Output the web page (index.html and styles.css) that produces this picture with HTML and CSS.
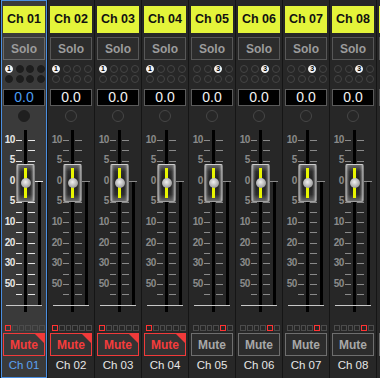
FILE: index.html
```html
<!DOCTYPE html>
<html>
<head>
<meta charset="utf-8">
<link rel="stylesheet" href="styles.css">
</head>
<body>
<div class="mixer">
  <div class="ch sel">
    <div class="name">Ch 01</div>
    <button class="solo">Solo</button>
    <div class="dots"><span class="dot badge">1</span><span class="dot"></span><span class="dot"></span><span class="dot"></span><span class="dot"></span><span class="dot"></span><span class="dot"></span><span class="dot"></span></div>
    <div class="val">0.0</div>
    <div class="knob"></div>
    <div class="fader">
      <div class="scale"><span>10</span><span>5</span><span>0</span><span>5</span><span>10</span><span>20</span><span>30</span><span>50</span></div>
      <div class="cap"><i class="grip"></i><i class="ball"></i></div>
    </div>
    <div class="leds"><i class="on"></i><i></i><i></i><i></i><i></i><i></i></div>
    <button class="mute on">Mute</button>
    <div class="label">Ch 01</div>
  </div>
  <div class="ch">
    <div class="name">Ch 02</div>
    <button class="solo">Solo</button>
    <div class="dots"><span class="dot badge">1</span><span class="dot"></span><span class="dot"></span><span class="dot"></span><span class="dot"></span><span class="dot"></span><span class="dot"></span><span class="dot"></span></div>
    <div class="val">0.0</div>
    <div class="knob"></div>
    <div class="fader">
      <div class="scale"><span>10</span><span>5</span><span>0</span><span>5</span><span>10</span><span>20</span><span>30</span><span>50</span></div>
      <div class="cap"><i class="grip"></i><i class="ball"></i></div>
    </div>
    <div class="leds"><i class="on"></i><i></i><i></i><i></i><i></i><i></i></div>
    <button class="mute on">Mute</button>
    <div class="label">Ch 02</div>
  </div>
  <div class="ch">
    <div class="name">Ch 03</div>
    <button class="solo">Solo</button>
    <div class="dots"><span class="dot badge">1</span><span class="dot"></span><span class="dot"></span><span class="dot"></span><span class="dot"></span><span class="dot"></span><span class="dot"></span><span class="dot"></span></div>
    <div class="val">0.0</div>
    <div class="knob"></div>
    <div class="fader">
      <div class="scale"><span>10</span><span>5</span><span>0</span><span>5</span><span>10</span><span>20</span><span>30</span><span>50</span></div>
      <div class="cap"><i class="grip"></i><i class="ball"></i></div>
    </div>
    <div class="leds"><i class="on"></i><i></i><i></i><i></i><i></i><i></i></div>
    <button class="mute on">Mute</button>
    <div class="label">Ch 03</div>
  </div>
  <div class="ch">
    <div class="name">Ch 04</div>
    <button class="solo">Solo</button>
    <div class="dots"><span class="dot badge">1</span><span class="dot"></span><span class="dot"></span><span class="dot"></span><span class="dot"></span><span class="dot"></span><span class="dot"></span><span class="dot"></span></div>
    <div class="val">0.0</div>
    <div class="knob"></div>
    <div class="fader">
      <div class="scale"><span>10</span><span>5</span><span>0</span><span>5</span><span>10</span><span>20</span><span>30</span><span>50</span></div>
      <div class="cap"><i class="grip"></i><i class="ball"></i></div>
    </div>
    <div class="leds"><i class="on"></i><i></i><i></i><i></i><i></i><i></i></div>
    <button class="mute on">Mute</button>
    <div class="label">Ch 04</div>
  </div>
  <div class="ch">
    <div class="name">Ch 05</div>
    <button class="solo">Solo</button>
    <div class="dots"><span class="dot"></span><span class="dot"></span><span class="dot badge">3</span><span class="dot"></span><span class="dot"></span><span class="dot"></span><span class="dot"></span><span class="dot"></span></div>
    <div class="val">0.0</div>
    <div class="knob"></div>
    <div class="fader">
      <div class="scale"><span>10</span><span>5</span><span>0</span><span>5</span><span>10</span><span>20</span><span>30</span><span>50</span></div>
      <div class="cap"><i class="grip"></i><i class="ball"></i></div>
    </div>
    <div class="leds"><i></i><i></i><i></i><i></i><i class="on"></i><i></i></div>
    <button class="mute">Mute</button>
    <div class="label">Ch 05</div>
  </div>
  <div class="ch">
    <div class="name">Ch 06</div>
    <button class="solo">Solo</button>
    <div class="dots"><span class="dot"></span><span class="dot"></span><span class="dot badge">3</span><span class="dot"></span><span class="dot"></span><span class="dot"></span><span class="dot"></span><span class="dot"></span></div>
    <div class="val">0.0</div>
    <div class="knob"></div>
    <div class="fader">
      <div class="scale"><span>10</span><span>5</span><span>0</span><span>5</span><span>10</span><span>20</span><span>30</span><span>50</span></div>
      <div class="cap"><i class="grip"></i><i class="ball"></i></div>
    </div>
    <div class="leds"><i></i><i></i><i></i><i></i><i class="on"></i><i></i></div>
    <button class="mute">Mute</button>
    <div class="label">Ch 06</div>
  </div>
  <div class="ch">
    <div class="name">Ch 07</div>
    <button class="solo">Solo</button>
    <div class="dots"><span class="dot"></span><span class="dot"></span><span class="dot badge">3</span><span class="dot"></span><span class="dot"></span><span class="dot"></span><span class="dot"></span><span class="dot"></span></div>
    <div class="val">0.0</div>
    <div class="knob"></div>
    <div class="fader">
      <div class="scale"><span>10</span><span>5</span><span>0</span><span>5</span><span>10</span><span>20</span><span>30</span><span>50</span></div>
      <div class="cap"><i class="grip"></i><i class="ball"></i></div>
    </div>
    <div class="leds"><i></i><i></i><i></i><i></i><i class="on"></i><i></i></div>
    <button class="mute">Mute</button>
    <div class="label">Ch 07</div>
  </div>
  <div class="ch">
    <div class="name">Ch 08</div>
    <button class="solo">Solo</button>
    <div class="dots"><span class="dot"></span><span class="dot"></span><span class="dot badge">3</span><span class="dot"></span><span class="dot"></span><span class="dot"></span><span class="dot"></span><span class="dot"></span></div>
    <div class="val">0.0</div>
    <div class="knob"></div>
    <div class="fader">
      <div class="scale"><span>10</span><span>5</span><span>0</span><span>5</span><span>10</span><span>20</span><span>30</span><span>50</span></div>
      <div class="cap"><i class="grip"></i><i class="ball"></i></div>
    </div>
    <div class="leds"><i></i><i></i><i></i><i></i><i class="on"></i><i></i></div>
    <button class="mute">Mute</button>
    <div class="label">Ch 08</div>
  </div>
  <div class="ch stub">
    <div class="name"></div>
    <div class="solo"></div>
    <div class="dots"></div>
    <div class="val"></div>
    <div class="knob"></div>
    <div class="fader"></div>
    <div class="leds"></div>
    <div class="mute"></div>
  </div>
</div>
</body>
</html>
```
FILE: styles.css
```css
html, body {
  margin: 0;
  padding: 0;
  background: #151515;
  width: 380px;
  height: 378px;
  overflow: hidden;
}
.mixer {
  display: flex;
  gap: 1px;
  height: 378px;
  padding-left: 1px;
  font-family: "Liberation Sans", Arial, sans-serif;
}
.ch {
  flex: 0 0 46px;
  width: 46px;
  box-sizing: border-box;
  background: #272727;
  display: flex;
  flex-direction: column;
  align-items: stretch;
  padding: 6px 2px 0;
}
.ch.sel {
  background: #3a3a3a;
  box-shadow: inset 0 0 0 1px #4a8ee0;
}
.name {
  height: 27px;
  flex: 0 0 27px;
  background: #e4f43a;
  color: #111;
  font-weight: bold;
  font-size: 12.5px;
  line-height: 27px;
  text-align: center;
}
.solo {
  margin: 4px 0 0;
  height: 23px;
  flex: 0 0 23px;
  padding: 0;
  box-sizing: border-box;
  border: 1px solid #575757;
  background: #2c2c2c;
  color: #9c9c9c;
  font: bold 12px "Liberation Sans", Arial, sans-serif;
}
.sel .solo {
  background: #3d3d3d;
  border-color: #6a6a6a;
}
.dots {
  margin-top: 5px;
  height: 18px;
  flex: 0 0 18px;
  display: grid;
  grid-template-columns: repeat(4, 8px);
  grid-auto-rows: 8px;
  column-gap: 2.6px;
  row-gap: 2px;
  padding-left: 2px;
}
.dot {
  width: 8px;
  height: 8px;
  box-sizing: border-box;
  border-radius: 50%;
  border: 1px solid #444;
}
.sel .dot {
  background: #1d1d1d;
  border-color: #1d1d1d;
}
.dot.badge, .sel .dot.badge {
  background: #f2f2f2;
  border-color: #f2f2f2;
  color: #000;
  font-size: 7px;
  font-weight: bold;
  line-height: 6px;
  text-align: center;
}
.val {
  margin-top: 6px;
  height: 17px;
  flex: 0 0 17px;
  box-sizing: border-box;
  background: #000;
  border: 1px solid #5a5a5a;
  color: #f2f2f2;
  font-size: 14px;
  line-height: 15px;
  text-align: center;
}
.sel .val {
  color: #4b9cf2;
}
.knob {
  margin: 4px auto 0;
  width: 12px;
  height: 12px;
  flex: 0 0 12px;
  box-sizing: border-box;
  border-radius: 50%;
  border: 1px solid #464646;
}
.sel .knob {
  background: #1f1f1f;
  border-color: #1f1f1f;
}
.fader {
  position: relative;
  height: 196px;
  flex: 0 0 196px;
  margin: 2px -2px 0;
  --tick: #8a8a8a;
  background:
    linear-gradient(var(--tick), var(--tick)) 34px 57px / 8px 1px no-repeat,
    linear-gradient(#000, #000) 37px 58px / 3px 123px no-repeat,
    linear-gradient(#c8c8c8, #c8c8c8) 5px 181px / 36px 1px no-repeat,
    linear-gradient(#000, #000) 23px 6px / 3px 182px no-repeat,
    repeating-linear-gradient(to bottom, var(--tick) 0 1px, transparent 1px 10.27px) 15px 16px / 6px 155px no-repeat,
    repeating-linear-gradient(to bottom, var(--tick) 0 1px, transparent 1px 10.27px) 27px 16px / 7px 155px no-repeat;
}
.stub .fader {
  background: none;
}
.sel .fader {
  --tick: #e6e6e6;
}
.scale {
  width: 13.5px;
  padding-top: 10.9px;
  display: flex;
  flex-direction: column;
}
.scale span {
  height: 10.27px;
  margin-bottom: 10.27px;
  line-height: 10.27px;
  font-size: 10px;
  font-weight: bold;
  letter-spacing: -0.7px;
  text-align: right;
  color: #8a8a8a;
}
.sel .scale span {
  color: #e6e6e6;
}
.cap {
  position: absolute;
  left: 15px;
  top: 40px;
  width: 19px;
  height: 38px;
  box-sizing: border-box;
  border-radius: 2px;
  border: 1px solid #808080;
  border-top-color: #cfcfcf;
  border-bottom-color: #a0a0a0;
  background:
    linear-gradient(to right, rgba(225,225,225,.75) 0, rgba(130,130,130,.45) 2px, transparent 4px, transparent 13px, rgba(130,130,130,.45) 15px, rgba(225,225,225,.75) 17px),
    linear-gradient(to bottom, #6a6a6a, #2e2e2e 18%, #1e1e1e 50%, #2e2e2e 82%, #6a6a6a);
  display: flex;
  justify-content: center;
  align-items: center;
}
.grip {
  position: absolute;
  left: 7px;
  top: 3px;
  width: 3px;
  height: 30px;
  background: #e8f500;
}
.ball {
  position: relative;
  width: 10px;
  height: 10px;
  border-radius: 50%;
  background: radial-gradient(circle at 45% 40%, #f0f0f0 0, #c8c8c8 35%, #9a9a9a 75%, #707070 100%);
}
.leds {
  margin-top: 5px;
  height: 6px;
  flex: 0 0 6px;
  display: flex;
  gap: 1px;
  padding-left: 2px;
}
.leds i {
  width: 6px;
  height: 6px;
  box-sizing: border-box;
  border: 1px solid #4c4c4c;
}
.leds i.on {
  border-color: #ff3333;
}
.mute {
  margin: 2px 0 0;
  height: 23px;
  flex: 0 0 23px;
  padding: 0;
  box-sizing: border-box;
  border: 1px solid #6e6e6e;
  background: #2c2c2c;
  color: #a8a8a8;
  font: bold 12px "Liberation Sans", Arial, sans-serif;
  position: relative;
}
.mute.on {
  border-color: #f03a3a;
  color: #f43c3c;
  background: #333;
}
.sel .mute.on {
  background: #3a3a3a;
}
.mute.on::after {
  content: "";
  position: absolute;
  top: 0;
  right: 0;
  border-style: solid;
  border-width: 0 9px 9px 0;
  border-color: transparent #f03a3a transparent transparent;
}
.label {
  height: 19px;
  line-height: 19px;
  text-align: center;
  font-size: 11.5px;
  color: #e6e6e6;
}
.sel .label {
  color: #5aa2f2;
}
```
